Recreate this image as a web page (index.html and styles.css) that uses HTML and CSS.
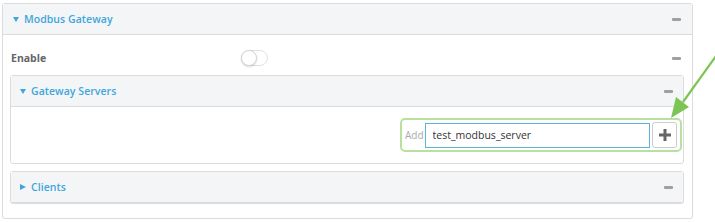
FILE: index.html
```html
<!DOCTYPE html>
<html>
<head>
<meta charset="utf-8">
<link rel="stylesheet" href="styles.css">
</head>
<body>
<div class="panel outer">
  <div class="phead">
    <span class="tri down"></span><span class="ptitle">Modbus Gateway</span>
    <span class="minus"></span>
  </div>
  <div class="row">
    <span class="label">Enable</span>
    <span class="toggle"><span class="knob"></span></span>
    <span class="minus"></span>
  </div>
  <div class="panel inner">
    <div class="phead">
      <span class="tri down"></span><span class="ptitle">Gateway Servers</span>
      <span class="minus"></span>
    </div>
    <div class="pbody">
      <div class="addbox">
        <span class="addlbl">Add</span>
        <input class="addinput" type="text" value="test_modbus_server">
        <span class="plusbtn">
          <svg width="12" height="12" viewBox="0 0 12 12"><path d="M4.5 0h3v4.5H12v3H7.5V12h-3V7.5H0v-3h4.5z" fill="#666"/></svg>
        </span>
      </div>
    </div>
  </div>
  <div class="panel inner clients">
    <div class="phead">
      <span class="tri right"></span><span class="ptitle">Clients</span>
      <span class="minus"></span>
    </div>
  </div>
</div>
<svg class="arrow" width="715" height="222" viewBox="0 0 715 222">
  <line x1="716" y1="56" x2="683" y2="102" stroke="#7cc554" stroke-width="2.2"/>
  <polygon points="671,118 676,97 689,107" fill="#7cc554"/>
</svg>
</body>
</html>
```
FILE: styles.css
```css
html, body {
  margin: 0;
  padding: 0;
  background: #fff;
  font-family: "Open Sans", "Noto Sans", sans-serif;
}
body {
  position: relative;
  width: 715px;
  height: 222px;
  overflow: hidden;
}
.panel {
  border: 1px solid #dcdcdc;
  border-radius: 3px;
  background: #fff;
}
.outer {
  margin: 3px 0 0 2px;
  width: 689px;
  height: 214px;
  box-shadow: 0 0 1px rgba(0,0,0,0.06);
}
.phead {
  display: flex;
  align-items: center;
  height: 30px;
  background: #f4f5f7;
  border-bottom: 1px solid #dcdcdc;
  padding: 0 11px 0 10px;
}
.tri {
  width: 0;
  height: 0;
  margin-right: 5px;
}
.tri.down {
  border-left: 3px solid transparent;
  border-right: 3px solid transparent;
  border-top: 5px solid #3fa6dc;
}
.tri.right {
  border-top: 3px solid transparent;
  border-bottom: 3px solid transparent;
  border-left: 6px solid #3fa6dc;
}
.ptitle {
  color: #3fa6dc;
  font-size: 10.5px;
  font-weight: 600;
  letter-spacing: 0.05px;
  flex: 1;
}
.minus {
  width: 9px;
  height: 3px;
  background: #a0a0a0;
  border-radius: 1px;
}
.row {
  display: flex;
  align-items: center;
  height: 16px;
  padding: 15px 11px 9px 8px;
}
.label {
  color: #666;
  font-size: 10.5px;
  font-weight: 700;
  width: 230px;
}
.toggle {
  width: 25px;
  height: 14px;
  border: 1px solid #e2e2e2;
  border-radius: 9px;
  background: #fff;
  position: relative;
  flex: none;
}
.knob {
  position: absolute;
  left: -1px;
  top: -1px;
  width: 14px;
  height: 14px;
  border: 1px solid #d6d6d6;
  border-radius: 50%;
  background: #fff;
  box-shadow: 0 1px 2px rgba(0,0,0,0.15);
}
.row .minus {
  margin-left: auto;
}
.inner {
  margin: 0 0 0 7px;
  width: 672px;
  box-shadow: none;
}
.inner .phead {
  padding-left: 9px;
  padding-right: 10px;
}
.pbody {
  display: flex;
  justify-content: flex-end;
  height: 56px;
  padding: 11px 1px 0 0;
  box-sizing: border-box;
}
.addbox {
  display: flex;
  align-items: center;
  width: 282px;
  height: 34px;
  box-sizing: border-box;
  border: 2px solid #b9e09e;
  border-radius: 5px;
  padding: 0 3px 0 3px;
}
.addlbl {
  color: #aaa;
  font-size: 10px;
  margin-right: 1px;
}
.addinput {
  width: 226px;
  height: 25px;
  box-sizing: border-box;
  border: 1px solid #5cb3e3;
  border-radius: 0;
  padding: 0 0 0 7px;
  font-family: "Open Sans", sans-serif;
  font-size: 10.5px;
  color: #333;
  outline: none;
  margin: 0;
}
.plusbtn {
  display: flex;
  align-items: center;
  justify-content: center;
  width: 25px;
  height: 26px;
  box-sizing: border-box;
  border: 1px solid #ccc;
  border-radius: 3px;
  margin-left: 2px;
  background: #fff;
}
.clients {
  margin-top: 7px;
}
.arrow {
  position: absolute;
  left: 0;
  top: 0;
  pointer-events: none;
}
```
